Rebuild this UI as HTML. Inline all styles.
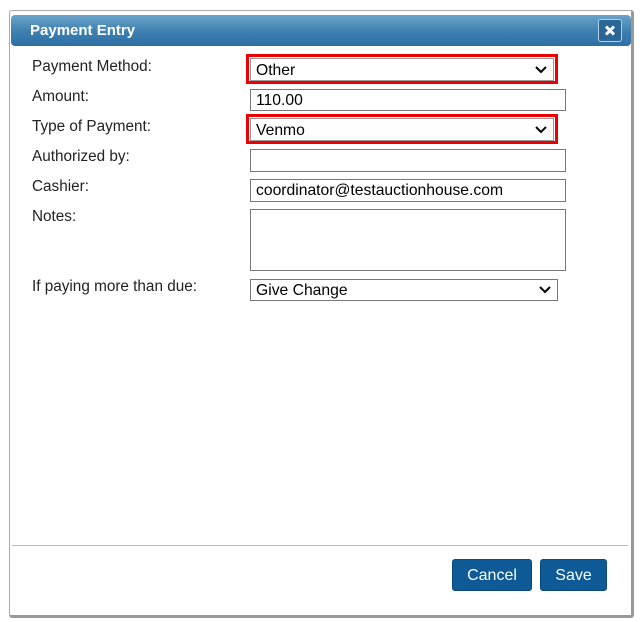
<!DOCTYPE html>
<html><head><style>
*{box-sizing:border-box;margin:0;padding:0}
body{width:643px;height:622px;background:#fff;position:relative;overflow:hidden;font-family:"Liberation Sans",Arial,sans-serif}
.dlg{position:absolute;left:9px;top:10px;width:625px;height:608px;background:#fff;border:1px solid #aaa;border-right:3px solid #999;border-bottom:3px solid #999;border-radius:3px}
.hd{position:absolute;left:11px;top:15px;width:620px;height:31px;background:linear-gradient(#6aa3c9,#3d7fb0 55%,#2d6fa3);border-radius:4px;color:#fff;font-weight:bold;font-size:15px;line-height:31px;padding-left:19px}
.x{position:absolute;left:598px;top:19px;width:24px;height:23px;background:#2a6797;border:1px solid #b8cfe2;border-radius:3px}
.l{position:absolute;left:32px;font-size:15.3px;color:#222}
.f{position:absolute;left:250px;border:1px solid #777;background:#fff;font-size:15.7px;color:#000;padding-left:5px}
.red{position:absolute;left:246px;width:312px;height:30px;border:3px solid #e00}
.ch{position:absolute;right:6px;top:2px}
.sep{position:absolute;left:12px;top:545px;width:616px;height:1px;background:#bbb}
.b{position:absolute;top:559px;height:32px;background:#0d5a96;border:1px solid #0a4a7c;border-radius:3px;color:#fff;font-size:16px;text-align:center;line-height:32px}
</style></head><body>
<div class="dlg"></div>
<div class="hd">Payment Entry</div>
<div class="x"><svg width="22" height="21" viewBox="0 0 22 21"><path d="M7 6.5l8 8M15 6.5l-8 8" stroke="#fff" stroke-width="3"/></svg></div>
<div class="l" style="top:58px">Payment Method:</div>
<div class="red" style="top:54px"></div>
<div class="f" style="top:58px;width:304px;height:23px;line-height:23px;border-color:#999">Other<svg class="ch" width="12" height="8" viewBox="0 0 12 8" style="top:7px"><path d="M1 1l5 5 5-5" stroke="#000" stroke-width="2" fill="none"/></svg></div>
<div class="l" style="top:88px">Amount:</div>
<div class="f" style="top:89px;width:316px;height:22px;line-height:21px">110.00</div>
<div class="l" style="top:118px">Type of Payment:</div>
<div class="red" style="top:114px"></div>
<div class="f" style="top:118px;width:304px;height:23px;line-height:23px;border-color:#999">Venmo<svg class="ch" width="12" height="8" viewBox="0 0 12 8" style="top:7px"><path d="M1 1l5 5 5-5" stroke="#000" stroke-width="2" fill="none"/></svg></div>
<div class="l" style="top:148px">Authorized by:</div>
<div class="f" style="top:149px;width:316px;height:23px"></div>
<div class="l" style="top:178px">Cashier:</div>
<div class="f" style="top:179px;width:316px;height:23px;line-height:21px">coordinator@testauctionhouse.com</div>
<div class="l" style="top:208px">Notes:</div>
<div class="f" style="top:209px;width:316px;height:62px"></div>
<div class="l" style="top:278px">If paying more than due:</div>
<div class="f" style="top:279px;width:308px;height:22px;line-height:21px">Give Change<svg class="ch" width="12" height="8" viewBox="0 0 12 8" style="top:6px"><path d="M1 1l5 5 5-5" stroke="#000" stroke-width="2" fill="none"/></svg></div>
<div class="sep"></div>
<div class="b" style="left:452px;width:80px">Cancel</div>
<div class="b" style="left:540px;width:67px">Save</div>
</body></html>
